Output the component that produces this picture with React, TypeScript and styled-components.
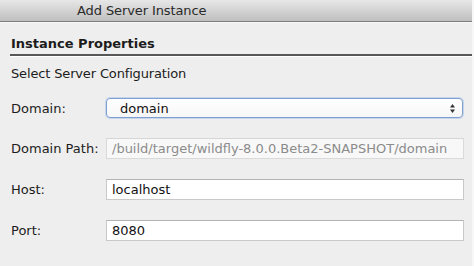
import React from "react";
import styled, { createGlobalStyle } from "styled-components";

const Global = createGlobalStyle`
  html, body { margin: 0; padding: 0; background: #eeeeee; }
  body { font-family: "DejaVu Sans", "Liberation Sans", sans-serif; }
`;

const Window = styled.div`
  width: 474px;
  height: 266px;
  display: flex;
  flex-direction: column;
  background: #eeeeee;
  overflow: hidden;
  border-right: 2px solid #f7f7f7;
  box-sizing: border-box;
`;

const TitleBar = styled.div`
  height: 21px;
  flex: none;
  background: linear-gradient(#e7e7e7, #bfbfbf);
  border-bottom: 1px solid #7d7d7d;
  box-shadow: 0 1px 0 #f8f8f8;
  display: flex;
  align-items: center;
  padding-left: 77px;
  font-size: 13px;
  letter-spacing: -0.1px;
  color: #2a2a2a;
`;

const Body = styled.div`
  padding: 14px 0 0 10px;
  display: flex;
  flex-direction: column;
`;

const SectionTitle = styled.div`
  font-size: 13px;
  font-weight: bold;
  color: #1c1c1c;
  padding: 0 0 2px 1px;
  border-bottom: 2px solid #575757;
  box-shadow: 0 1px 0 #ffffff;
  line-height: 16px;
`;

const SubTitle = styled.div`
  margin-top: 10px;
  padding-left: 1px;
  font-size: 13px;
  letter-spacing: -0.15px;
  color: #1c1c1c;
  line-height: 16px;
`;

const Form = styled.div`
  margin-top: 16px;
  display: grid;
  grid-template-columns: 96px 1fr;
  row-gap: 20px;
  align-items: center;
  padding-right: 8px;
`;

const Label = styled.div`
  font-size: 13px;
  color: #1c1c1c;
  padding-left: 1px;
`;

const SelectBox = styled.div`
  height: 20px;
  box-sizing: border-box;
  margin-right: 1px;
  border: 1px solid #7f9fcc;
  border-radius: 4px;
  background: linear-gradient(#ffffff, #f6f6f6);
  box-shadow: 0 0 0 1px #c7d6ee;
  display: flex;
  align-items: center;
  justify-content: space-between;
  padding: 0 6px 0 13px;
  font-size: 13px;
  color: #111;
`;

const Field = styled.div<{ $disabled?: boolean }>`
  height: 21px;
  box-sizing: border-box;
  border: 1px solid ${(p) => (p.$disabled ? "#dadada" : "#c9c9c9")};
  border-top-color: ${(p) => (p.$disabled ? "#d6d6d6" : "#b4b4b4")};
  background: ${(p) => (p.$disabled ? "#f8f8f8" : "#ffffff")};
  color: ${(p) => (p.$disabled ? "#8b8b8b" : "#111111")};
  font-size: 13px;
  display: flex;
  align-items: center;
  padding-left: 5px;
  white-space: nowrap;
  overflow: hidden;
`;

const Arrows = () => (
  <svg width="7" height="11" viewBox="0 0 7 11">
    <path d="M3.5 1 L6 4.5 L1 4.5 Z" fill="#333" />
    <path d="M3.5 10 L6 6.5 L1 6.5 Z" fill="#333" />
  </svg>
);

export default function App() {
  return (
    <>
      <Global />
      <Window>
        <TitleBar>Add Server Instance</TitleBar>
        <Body>
          <SectionTitle>Instance Properties</SectionTitle>
          <SubTitle>Select Server Configuration</SubTitle>
          <Form>
            <Label>Domain:</Label>
            <SelectBox>
              <span>domain</span>
              <Arrows />
            </SelectBox>
            <Label>Domain Path:</Label>
            <Field $disabled>/build/target/wildfly-8.0.0.Beta2-SNAPSHOT/domain</Field>
            <Label>Host:</Label>
            <Field>localhost</Field>
            <Label>Port:</Label>
            <Field>8080</Field>
          </Form>
        </Body>
      </Window>
    </>
  );
}
